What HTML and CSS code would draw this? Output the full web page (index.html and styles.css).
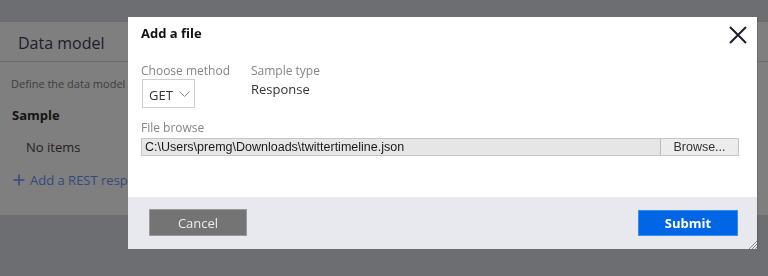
FILE: index.html
```html
<!DOCTYPE html>
<html lang="en">
<head>
<meta charset="utf-8">
<title>Add a file</title>
<link rel="stylesheet" href="styles.css">
</head>
<body>
<div class="page">
  <div class="topbar"></div>
  <section class="panel">
    <header class="panel-head"><h1 class="panel-title">Data model</h1></header>
    <div class="panel-body">
      <p class="desc">Define the data model for this data page by importing a sample JSON REST response. The fields in this sample become properties of the data</p>
      <h2 class="section-title">Sample</h2>
      <p class="empty">No items</p>
      <a class="add-link" href="#"><svg class="plus" width="12" height="12" viewBox="0 0 12 12"><path d="M6 0.5V11.5M0.5 6H11.5" stroke="currentColor" stroke-width="1.5" fill="none"/></svg>Add a REST response</a>
    </div>
  </section>
</div>
<div class="overlay"></div>
<div class="modal">
  <div class="modal-head">
    <h3 class="modal-title">Add a file</h3>
    <button class="close" aria-label="Close"><svg width="18" height="18" viewBox="0 0 18 18"><path d="M1 1L17 17M17 1L1 17" stroke="#1c1c2c" stroke-width="2" fill="none"/></svg></button>
  </div>
  <div class="modal-body">
    <div class="row">
      <div class="field method">
        <div class="label">Choose method</div>
        <div class="select"><span>GET</span><svg width="11" height="6" viewBox="0 0 11 6"><polyline points="0.5,0.5 5.5,5.5 10.5,0.5" stroke="#8a8a8a" stroke-width="1" fill="none"/></svg></div>
      </div>
      <div class="field">
        <div class="label">Sample type</div>
        <div class="value">Response</div>
      </div>
    </div>
    <div class="field file-field">
      <div class="label">File browse</div>
      <div class="file-input"><span class="path">C:\Users\premg\Downloads\twittertimeline.json</span><span class="browse">Browse...</span></div>
    </div>
  </div>
  <div class="modal-foot">
    <button class="btn cancel">Cancel</button>
    <button class="btn submit">Submit</button>
  </div>
  <svg class="grip" width="9" height="8" viewBox="0 0 9 8"><path d="M9 0L1 8M9 3L4 8M9 6L7 8" stroke="#8a8a8a" stroke-width="1" fill="none"/></svg>
</div>
</body>
</html>
```
FILE: styles.css
```css
* { box-sizing: border-box; }
html, body { margin: 0; padding: 0; }
body {
  width: 768px;
  height: 276px;
  overflow: hidden;
  background: #dadce4;
  font-family: "Open Sans", "Liberation Sans", sans-serif;
  position: relative;
}
.topbar { height: 22px; }
.panel { background: #ffffff; }
.panel-head {
  height: 40px;
  padding: 10px 18px 0;
  border-bottom: 1px solid #d4d4d4;
}
.panel-title {
  margin: 0;
  font-size: 16px;
  line-height: 22px;
  font-weight: 400;
  color: #3c3c54;
}
.panel-body { padding: 14px 5px 26px 11px; overflow: hidden; }
.desc {
  margin: 0;
  font-size: 11px;
  line-height: 15px;
  color: #7c7c7c;
  white-space: nowrap;
}
.section-title {
  margin: 15px 0 0 1px;
  font-size: 13px;
  line-height: 18px;
  font-weight: 700;
  color: #2a2a2a;
}
.empty {
  margin: 14px 0 0 15px;
  font-size: 13px;
  line-height: 18px;
  color: #444;
}
.add-link {
  display: flex;
  align-items: center;
  margin: 15px 0 0 2px;
  font-size: 13px;
  line-height: 18px;
  color: #7090f4;
  text-decoration: none;
}
.plus { margin-right: 5px; }
.overlay {
  position: fixed;
  inset: 0;
  background: rgba(0, 0, 0, 0.5);
}
.modal {
  position: absolute;
  left: 128px;
  top: 17px;
  width: 629px;
  height: 232px;
  background: #ffffff;
  display: flex;
  flex-direction: column;
  box-shadow: 1px 0 0 rgba(0,0,0,0.12);
}
.modal-head { padding: 7px 13px 0; height: 24px; }
.modal-title {
  margin: 0;
  font-size: 13px;
  line-height: 18px;
  font-weight: 700;
  color: #111;
}
.close {
  position: absolute;
  left: 601px;
  top: 9px;
  width: 18px;
  height: 18px;
  padding: 0;
  border: 0;
  background: none;
  display: block;
}
.close svg { display: block; }
.modal-body { flex: 1; padding: 22px 18px 0 13px; }
.row { display: flex; }
.field.method { width: 110px; }
.label {
  font-size: 12px;
  line-height: 16px;
  color: #858585;
}
.select {
  display: inline-flex;
  align-items: center;
  margin-left: 1px;
  height: 29px;
  padding: 0 4px 0 6px;
  border: 1px solid #cfcfcf;
  font-size: 13px;
  line-height: 18px;
  color: #333;
  gap: 6px;
}
.select span { padding-top: 2px; }
.value {
  margin-top: 1px;
  font-size: 13px;
  line-height: 18px;
  color: #333;
}
.file-field { margin-top: 12px; }
.file-input {
  margin-top: 2px;
  display: flex;
  height: 18px;
  border: 1px solid #c6c6c6;
  background: #e6e6e6;
  font-family: "Liberation Sans", Arial, sans-serif;
  font-size: 12.5px;
  line-height: 16px;
}
.path { flex: 1; padding-left: 3px; color: #1a1a1a; }
.browse {
  width: 78px;
  border-left: 1px solid #bcbcbc;
  background: #ececec;
  text-align: center;
  color: #333;
}
.modal-foot {
  height: 52px;
  background: #e8e9ee;
  display: flex;
  justify-content: space-between;
  align-items: flex-start;
  padding: 12px 19px 0 21px;
}
.btn {
  font-family: "Open Sans", "Liberation Sans", sans-serif;
  font-size: 13px;
  line-height: 23px;
  margin: 0;
  padding: 2px 0 0;
  cursor: pointer;
}
.cancel {
  width: 98px;
  height: 27px;
  background: #747474;
  border: 1px solid #9a9a9a;
  color: #ededed;
}
.submit {
  width: 100px;
  height: 26px;
  margin-top: 1px;
  padding-top: 1px;
  background: #0066e6;
  border: 1px solid #3a8cf0;
  color: #fff;
  font-weight: 700;
}
.grip { position: absolute; right: 0; bottom: 0; }
```
